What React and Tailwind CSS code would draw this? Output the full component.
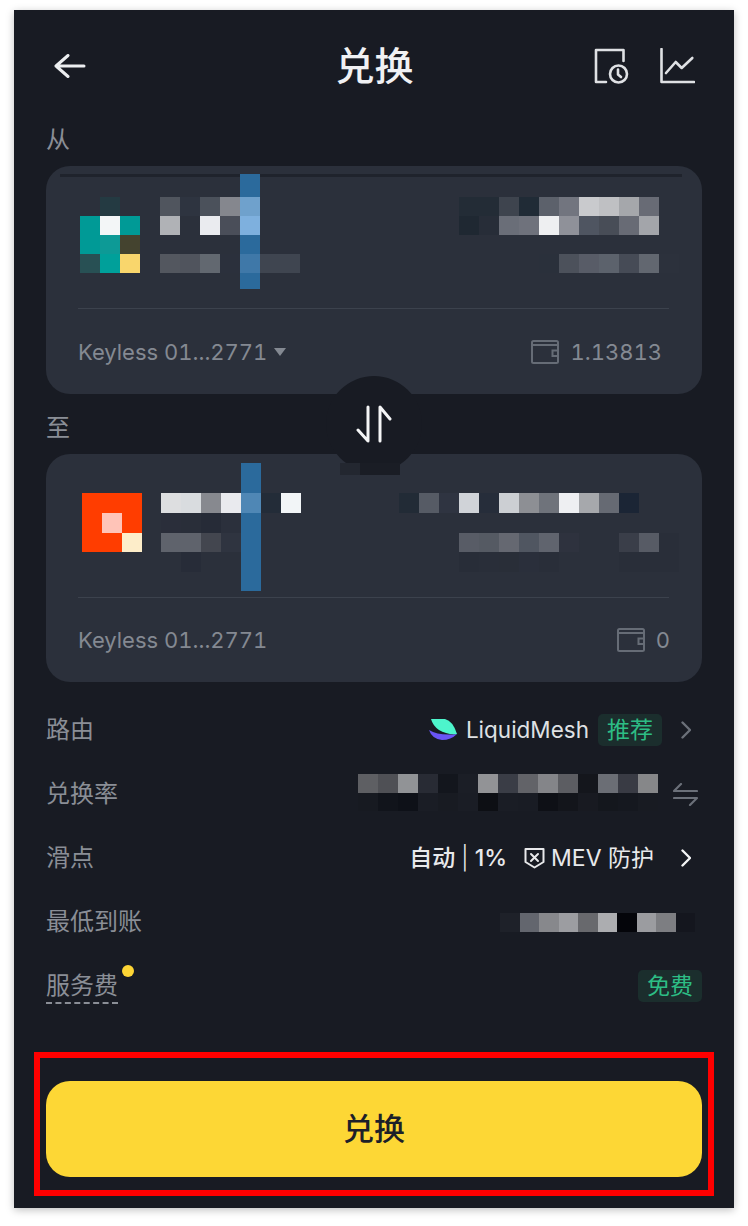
import React from "react";

const row = (h, cells) => ({ h, cells });

const fromName = [
  row("h-[23px]", ["", "", "", "", "bg-[#2b6a9c]"]),
  row("h-[19px]", ["bg-[#50555e]", "bg-[#2e3440]", "bg-[#4b515b]", "bg-[#85878e]", "bg-[#6fa1cc]"]),
  row("h-[19px]", ["bg-[#b0b2b6]", "", "bg-[#eaebef]", "bg-[#4a4e59]", "bg-[#7eb0de]"]),
  row("h-[19px]", ["", "", "", "", "bg-[#2b6a9c]"]),
  row("h-[19px]", ["bg-[#53575f]", "bg-[#50545d]", "bg-[#626870]", "bg-[#2b303c]", "bg-[#3f78a8]", "bg-[#3f4550]", "bg-[#3f4550]"]),
  row("h-[16px]", ["", "", "", "", "bg-[#2b6a9c]"]),
];

const fromAmount = [
  row("h-[19px]", ["bg-[#232c36]", "bg-[#232c36]", "bg-[#3e444e]", "bg-[#202b36]", "bg-[#5c616b]", "bg-[#72757f]", "bg-[#c9cacd]", "bg-[#bfc0c3]", "bg-[#a5a7ab]", "bg-[#686b75]", "bg-[#2b303b]"]),
  row("h-[19px]", ["bg-[#1f2832]", "bg-[#272d38]", "bg-[#6a6e78]", "bg-[#6f727c]", "bg-[#eeeff1]", "bg-[#8f9199]", "bg-[#4f5561]", "bg-[#484d57]", "bg-[#686b75]", "bg-[#a3a5aa]", ""]),
  row("h-[19px]", []),
  row("h-[19px]", ["", "", "", "", "bg-[#2a303b]", "bg-[#4c515b]", "bg-[#585c67]", "bg-[#5c626c]", "bg-[#464b56]", "bg-[#626770]", "bg-[#2c313c]"]),
];

const fromToken = [
  row("h-[19px]", ["", "bg-[#243a42]", ""]),
  row("h-[19px]", ["bg-[#009a96]", "bg-[#f3f6f7]", "bg-[#009a96]"]),
  row("h-[19px]", ["bg-[#009a96]", "bg-[#0d9a96]", "bg-[#44432f]"]),
  row("h-[19px]", ["bg-[#285054]", "bg-[#00a09a]", "bg-[#f9d66c]"]),
];

const toName = [
  row("h-[30px]", ["", "", "", "", "bg-[#2b6a9c]"]),
  row("h-[20px]", ["bg-[#dddee0]", "bg-[#d9dcdf]", "bg-[#87898f]", "bg-[#e9eaee]", "bg-[#4f87b5]", "bg-[#232c38]", "bg-[#f2f5f7]"]),
  row("h-[20px]", ["bg-[#2a2e3a]", "bg-[#292e39]", "bg-[#262b37]", "bg-[#2b303c]", "bg-[#2b6a9c]"]),
  row("h-[19px]", ["bg-[#5f636c]", "bg-[#5f636c]", "bg-[#43464f]", "bg-[#2f3440]", "bg-[#2b6a9c]"]),
  row("h-[20px]", ["", "bg-[#272c38]", "", "", "bg-[#2b6a9c]"]),
  row("h-[19px]", ["", "", "", "", "bg-[#2b6a9c]"]),
];

const toAmount = [
  row("h-[20px]", ["bg-[#222b36]", "bg-[#565b65]", "bg-[#2f3441]", "bg-[#d0d3d8]", "bg-[#262d3a]", "bg-[#cccfd3]", "bg-[#8d8f94]", "bg-[#6f737b]", "bg-[#eeeff2]", "bg-[#a6a8ac]", "bg-[#666a73]", "bg-[#1b2535]"]),
  row("h-[20px]", []),
  row("h-[19px]", ["", "", "", "bg-[#585c66]", "bg-[#555a63]", "bg-[#656871]", "bg-[#505661]", "bg-[#60646e]", "bg-[#2e323e]", "bg-[#2b303b]", "bg-[#2b303b]", "bg-[#3a3e49]", "bg-[#575b65]", "bg-[#292e39]"]),
  row("h-[20px]", ["", "", "", "bg-[#282d38]", "bg-[#292e39]", "bg-[#292e38]", "bg-[#2a2f3b]", "bg-[#292e39]", "", "", "", "bg-[#292e39]", "bg-[#292e39]", "bg-[#292e39]"]),
];

const toToken = [
  row("h-[20px]", ["bg-[#ff3d00]", "bg-[#ff3d00]", "bg-[#ff3d00]"]),
  row("h-[20px]", ["bg-[#ff3d00]", "bg-[#ffc4b8]", "bg-[#ff3d00]"]),
  row("h-[19px]", ["bg-[#ff3d00]", "bg-[#ff3d00]", "bg-[#fdedc9]"]),
];

const rate = [
  row("h-[19px]", ["bg-[#5e5f63]", "bg-[#4f5055]", "bg-[#919396]", "bg-[#282b34]", "bg-[#13161d]", "bg-[#1b1e26]", "bg-[#929396]", "bg-[#3a3d46]", "bg-[#626368]", "bg-[#848589]", "bg-[#5c5d62]", "bg-[#14161c]", "bg-[#6b6e75]", "bg-[#393b44]", "bg-[#868789]"]),
  row("h-[18px]", ["bg-[#171a21]", "bg-[#11141b]", "bg-[#0e1118]", "bg-[#1a1d25]", "bg-[#181b22]", "bg-[#1a1d25]", "bg-[#0d0f14]", "bg-[#1a1d25]", "bg-[#191c24]", "bg-[#0e1016]", "bg-[#13151b]", "bg-[#181a21]", "bg-[#14171d]", "bg-[#15181f]", "bg-[#181b22]"]),
];

const minReceived = [
  row("h-[19px]", ["bg-[#1e2129]", "bg-[#63666e]", "bg-[#87888c]", "bg-[#9c9da1]", "bg-[#68696d]", "bg-[#acadb0]", "bg-[#04050a]", "bg-[#9b9ca0]", "bg-[#7d7e82]", "bg-[#14161e]"]),
];

function Mosaic({ rows, className = "", cell = "w-[20px]" }) {
  return (
    <div className={className}>
      {rows.map((r, i) => (
        <div key={i} className={`flex ${r.h}`}>
          {r.cells.map((c, j) => (
            <div key={j} className={`${cell} ${c}`} />
          ))}
        </div>
      ))}
    </div>
  );
}

function Chevron({ color, className }) {
  return (
    <svg className={className} width="10" height="18" viewBox="0 0 10 18" fill="none" stroke={color} strokeWidth="2.4" strokeLinecap="round" strokeLinejoin="round">
      <path d="M1.5 1.5L9 9L1.5 16.5" />
    </svg>
  );
}

function WalletIcon() {
  return (
    <svg width="28" height="24" viewBox="0 0 28 24" fill="none" stroke="#666c76" strokeWidth="2">
      <path d="M1 5V2.5Q1 1 2.5 1H25.5Q27 1 27 2.5V22Q27 23 25.5 23H2.5Q1 23 1 21.5V5H27" />
      <path d="M27 10.5H21.5V16H27" />
    </svg>
  );
}

function Footer({ caret, balance, pad }) {
  return (
    <div className={`flex h-[86px] items-center justify-between pl-[32px] text-[22px] tabular-nums text-[#848992] ${pad}`}>
      <div className="flex items-center">
        <span>Keyless 01...2771</span>
        {caret && (
          <svg className="ml-[7px]" width="12" height="8" viewBox="0 0 12 8">
            <path d="M0 0H12L6 8Z" fill="#848992" />
          </svg>
        )}
      </div>
      <div className="flex items-center gap-[11px]">
        <WalletIcon />
        <span>{balance}</span>
      </div>
    </div>
  );
}

function Pill({ children }) {
  return (
    <span className="flex h-[32px] w-[64px] items-center justify-center rounded-[5px] bg-[#1b2e2d] text-[23px] text-[#2dbd85]">
      {children}
    </span>
  );
}

function Row({ label, children }) {
  return (
    <div className="flex h-[64px] items-center justify-between">
      <span className="text-[24px] text-[#8a8e96]">{label}</span>
      {children}
    </div>
  );
}

export default function App() {
  return (
    <div className="min-h-[1226px] bg-white px-[14px] pt-[10px] font-['Inter','Noto_Sans_CJK_SC',sans-serif]">
      <div className="h-[1198px] bg-[#181b23] shadow-[0_2px_8px_rgba(0,0,0,0.25)]">
        <header className="flex h-[112px] items-center pl-[40px] pr-[39px]">
          <div className="flex-1">
            <svg width="32" height="24" viewBox="0 0 32 24" fill="none" stroke="#eceef0" strokeWidth="3" strokeLinecap="round" strokeLinejoin="round">
              <path d="M30 12H2M14 1.5L2 12L14 22.5" />
            </svg>
          </div>
          <h1 className="text-[39px] font-medium text-[#f0f1f3]">兑换</h1>
          <div className="flex flex-1 justify-end gap-[31px]">
            <svg width="35" height="36" viewBox="0 0 35 36" fill="none" stroke="#dfe1e4" strokeWidth="2.6" strokeLinecap="round" strokeLinejoin="round">
              <path d="M29.5 13V2H2V34H12" />
              <circle cx="24.5" cy="26" r="8.5" />
              <path d="M24 21.5V26.5L27 29" />
            </svg>
            <svg width="35" height="36" viewBox="0 0 35 36" fill="none" stroke="#dfe1e4" strokeWidth="2.6" strokeLinecap="round" strokeLinejoin="round">
              <path d="M1.5 1V34H34" />
              <path d="M6 25L15.7 14L21.7 20L32.3 10" />
            </svg>
          </div>
        </header>

        <div className="px-[32px]">
          <div className="mb-[8px] flex h-[36px] items-center text-[24px] text-[#8a8e96]">从</div>

          <section className="relative h-[228px] rounded-[24px] bg-[#2b303b] pt-[8px]">
            <div className="absolute left-[14px] right-[20px] top-[8px] h-[3px] bg-[#1f232c]" />
            <div className="relative flex h-[115px] pl-[34px] pr-[23px]">
              <Mosaic rows={fromToken} className="mt-[23px]" />
              <Mosaic rows={fromName} className="ml-[20px]" />
              <Mosaic rows={fromAmount} className="ml-auto mt-[23px]" />
            </div>
            <div className="ml-[32px] mr-[33px] mt-[19px] h-px bg-[#3c424d]" />
            <Footer caret balance="1.13813" pad="pr-[40px]" />
          </section>

          <div className="relative flex h-[60px] items-center pt-[8px] text-[24px] text-[#8a8e96]">
            至
            <div className="absolute left-1/2 top-[-18px] z-10 flex h-[96px] w-[96px] -translate-x-1/2 items-center justify-center rounded-full bg-[#181b23]">
              <svg width="36" height="38" viewBox="0 0 36 38" fill="none" stroke="#f4f5f6" strokeWidth="3" strokeLinecap="round" strokeLinejoin="round">
                <path d="M12 2V36L2 25" />
                <path d="M24 36V2L34 14" />
              </svg>
              <div className="absolute left-[14px] top-[87px] flex h-[12px]">
                <div className="w-[20px] bg-[#232730]" />
                <div className="w-[40px] bg-[#1a1d25]" />
              </div>
            </div>
          </div>

          <section className="h-[228px] rounded-[24px] bg-[#2b303b] pt-[9px]">
            <div className="flex h-[128px] pl-[36px] pr-[23px]">
              <Mosaic rows={toToken} className="mt-[30px]" />
              <Mosaic rows={toName} className="ml-[19px]" />
              <Mosaic rows={toAmount} className="ml-auto mt-[30px]" />
            </div>
            <div className="ml-[32px] mr-[33px] mt-[6px] h-px bg-[#3c424d]" />
            <Footer balance="0" pad="pr-[32px] pb-[2px]" />
          </section>

          <div className="mt-[16px]">
            <Row label="路由">
              <div className="flex items-center">
                <svg width="28" height="22" viewBox="0 0 28 22">
                  <path d="M0 11Q10 17 28 15Q22 21 13 21Q3 20 0 11Z" fill="#6a55f5" />
                  <path d="M2 0H16Q24 2 28 15Q18 16 10 11Q4 7 2 0Z" fill="#4df5cc" />
                </svg>
                <span className="ml-[9px] text-[22.5px] text-[#dfe1e4]">LiquidMesh</span>
                <span className="ml-[9px]"><Pill>推荐</Pill></span>
                <Chevron color="#6b7079" className="ml-[19px] mr-[11px]" />
              </div>
            </Row>
            <Row label="兑换率">
              <div className="flex items-center">
                <Mosaic rows={rate} className="mb-[3px]" />
                <svg className="ml-[15px] mr-[4px]" width="25" height="23" viewBox="0 0 25 23" fill="none" stroke="#6b7079" strokeWidth="2.2" strokeLinecap="round" strokeLinejoin="round">
                  <path d="M24 8H1L8 1" />
                  <path d="M1 15H24L17 22" />
                </svg>
              </div>
            </Row>
            <Row label="滑点">
              <div className="flex items-center text-[23px] font-medium text-[#e8e9eb]">
                <span>自动 <span className="font-light">|</span> 1%</span>
                <svg className="ml-[17px]" width="21" height="22" viewBox="0 0 21 22" fill="none" stroke="#e8e9eb" strokeWidth="2" strokeLinecap="round" strokeLinejoin="round">
                  <path d="M1.5 2H19.5V15L10.5 20.5L1.5 15Z" />
                  <path d="M7 7L14 14M14 7L7 14" />
                </svg>
                <span className="ml-[6px] font-normal">MEV 防护</span>
                <Chevron color="#f4f5f6" className="ml-[27px] mr-[11px]" />
              </div>
            </Row>
            <Row label="最低到账">
              <Mosaic rows={minReceived} cell="w-[19.5px]" className="mr-[7px]" />
            </Row>
            <Row
              label={
                <span className="relative inline-block border-b-2 border-dashed border-[#8a8e96] leading-[32px]">
                  服务费
                  <span className="absolute right-[-16px] top-[-5px] h-[12px] w-[12px] rounded-full bg-[#fdd535]" />
                </span>
              }
            >
              <Pill>免费</Pill>
            </Row>
          </div>
        </div>

        <div className="mx-[20px] mt-[34px] border-[6px] border-[#ff0000] pb-[13px] pl-[6px] pr-[7px] pt-[23px]">
          <button className="flex h-[96px] w-[656px] items-center justify-center rounded-[24px] bg-[#fdd735] text-[31px] font-medium text-[#1c2029]">
            兑换
          </button>
        </div>
      </div>
    </div>
  );
}
